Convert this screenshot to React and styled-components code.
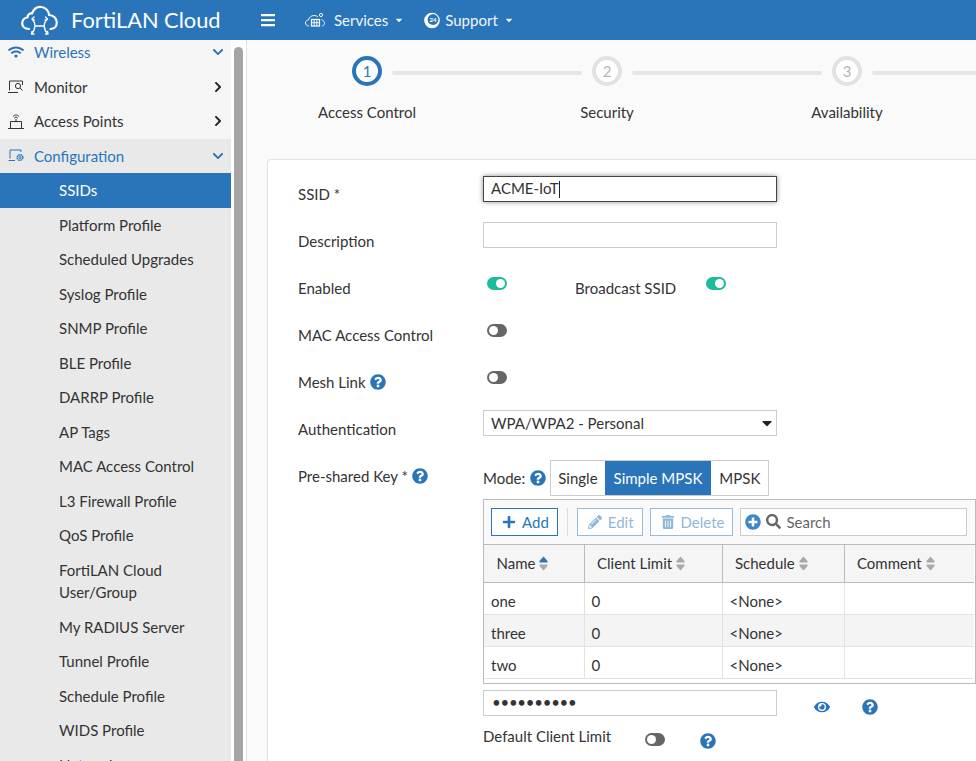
import styled, { createGlobalStyle } from "styled-components";
import {
  FaBars,
  FaCaretDown,
  FaChevronDown,
  FaChevronRight,
  FaEye,
  FaPencilAlt,
  FaPlus,
  FaPlusCircle,
  FaQuestionCircle,
  FaSearch,
  FaTrashAlt,
  FaWifi,
} from "react-icons/fa";

const BLUE = "#2a75b9";

const GlobalStyle = createGlobalStyle`
  html, body { margin: 0; height: 100%; overflow: hidden; }
  body { font-family: Lato, "Open Sans", sans-serif; font-size: 15px; color: #333; background: #fff; }
  * { box-sizing: border-box; }
`;

const Page = styled.div`
  width: 976px;
  height: 761px;
  display: flex;
  flex-direction: column;
  overflow: hidden;
`;

/* top bar */
const TopBar = styled.header`
  height: 40px;
  flex: none;
  background: ${BLUE};
  color: #fff;
  display: flex;
  align-items: center;
  padding-left: 21px;
`;

const Brand = styled.div`
  width: 239px;
  display: flex;
  align-items: center;
  gap: 13px;
  font-size: 21.8px;
  line-height: 40px;
`;

const MenuToggle = styled.div`
  width: 45px;
  display: flex;
  font-size: 16px;
`;

const TopMenu = styled.div`
  display: flex;
  align-items: center;
  gap: ${(p) => p.$iconGap}px;
  margin-right: ${(p) => p.$gap || 0}px;
  font-size: 15px;
  color: #f0f5fa;
  svg.caret { font-size: 10px; margin-left: ${(p) => 6 - p.$iconGap}px; }
`;

const Body = styled.div`
  flex: 1;
  display: flex;
  min-height: 0;
`;

/* sidebar */
const Sidebar = styled.nav`
  width: 231px;
  flex: none;
  background: #e9e9e9;
  overflow: hidden;
`;

const NavList = styled.div`
  margin-top: -4.8px;
`;

const TopItem = styled.div`
  height: 34.5px;
  display: flex;
  align-items: center;
  padding: 0 7.5px 0 8px;
  background: ${(p) => (p.$group ? "#e9e9e9" : "#f5f5f5")};
  color: ${(p) => (p.$open ? BLUE : "#333")};
  svg.arrow { font-size: 12px; color: ${(p) => (p.$open ? BLUE : "#222")}; margin-left: auto; }
`;

const NavIcon = styled.span`
  width: 26px;
  flex: none;
  display: flex;
  align-items: center;
`;

const SubItem = styled.div`
  min-height: 34.5px;
  padding: 6.12px 10px 6.13px 59px;
  line-height: 22.25px;
  background: ${(p) => (p.$active ? BLUE : "#e9e9e9")};
  color: ${(p) => (p.$active ? "#fff" : "#333")};
`;

const ScrollGutter = styled.div`
  width: 16px;
  flex: none;
  background: #fff;
  border-right: 1px solid #e3e3e3;
  padding: 7px 3px 0 3px;
`;

const ScrollThumb = styled.div`
  height: 100%;
  background: #a5a5a5;
  border-radius: 5px 5px 0 0;
`;

/* content */
const Content = styled.main`
  flex: 1;
  min-width: 0;
  background: #fafafa;
  overflow: hidden;
`;

const Steps = styled.div`
  display: flex;
  height: 119px;
  padding-top: 16px;
`;

const Step = styled.div`
  position: relative;
  width: 240px;
  flex: none;
  display: flex;
  flex-direction: column;
  align-items: center;
  gap: 15px;
  &::after {
    content: "";
    position: absolute;
    top: 15px;
    left: 145px;
    width: 190px;
    height: 4px;
    border-radius: 2px;
    background: #e6e6e6;
  }
`;

const StepCircle = styled.div`
  width: 30px;
  height: 30px;
  border-radius: 50%;
  border: 4px solid ${(p) => (p.$active ? BLUE : "#e2e2e2")};
  background: #fff;
  color: ${(p) => (p.$active ? BLUE : "#b5b5b5")};
  display: flex;
  align-items: center;
  justify-content: center;
  font-size: 15px;
`;

const StepLabel = styled.div`
  line-height: 22px;
`;

const Card = styled.section`
  margin-left: 20px;
  height: 640px;
  background: #fff;
  border: 1px solid #e2e2e2;
  border-right: none;
  border-bottom: none;
  border-radius: 4px 0 0 0;
  padding: 15.5px 0 0 30px;
`;

const Row = styled.div`
  display: flex;
  height: 46.9px;
`;

const Label = styled.div`
  width: 185px;
  flex: none;
  display: flex;
  align-items: center;
  gap: 4px;
  height: 22px;
  margin-top: 7.7px;
`;

const TextInput = styled.div`
  width: 294px;
  height: 26px;
  padding: 0 7px 1px;
  display: flex;
  align-items: center;
  background: #fff;
  color: #333;
  border: 1px solid ${(p) => (p.$focus ? "#444" : "#ccc")};
  box-shadow: ${(p) => (p.$focus ? "0 0 5px rgba(0,0,0,.45)" : "none")};
`;

const Caret = styled.span`
  width: 1px;
  height: 17px;
  margin-top: 2px;
  background: #222;
`;

const Toggle = styled.div`
  width: 20px;
  height: 13px;
  margin: ${(p) => p.$margin || "0 4px"};
  border-radius: 7px;
  background: ${(p) => (p.$on ? "#1abc9c" : "#666")};
  display: flex;
  align-items: center;
  justify-content: ${(p) => (p.$on ? "flex-end" : "flex-start")};
  padding: 0 2px;
  flex: none;
  &::before {
    content: "";
    width: 9px;
    height: 9px;
    border-radius: 50%;
    background: #fff;
  }
`;

const ToggleCell = styled.div`
  display: flex;
  align-items: flex-start;
  height: 22px;
  padding-top: 7.5px;
`;

const SideLabel = styled.div`
  margin-left: 64px;
  width: 127px;
  line-height: 22px;
  margin-top: 7.7px;
`;

const Help = styled(FaQuestionCircle)`
  color: ${BLUE};
  font-size: 16px;
  flex: none;
`;

const SelectBox = styled(TextInput)`
  justify-content: space-between;
  padding: 0 1px 0 7px;
`;

const SelectCaret = styled(FaCaretDown)`
  font-size: 16px;
  color: #222;
`;

const KeyField = styled.div`
  width: 493px;
  flex: none;
  margin-top: 3.1px;
`;

const ModeLine = styled.div`
  display: flex;
  align-items: center;
  gap: 5px;
  height: 36px;
  margin-bottom: 3px;
`;

const ModeButtons = styled.div`
  display: flex;
  border: 1px solid #ccc;
  height: 36px;
  margin-left: -1px;
`;

const ModeButton = styled.div`
  display: flex;
  align-items: center;
  padding: 0 ${(p) => p.$pad}px;
  background: ${(p) => (p.$active ? BLUE : "#fff")};
  color: ${(p) => (p.$active ? "#fff" : "#333")};
`;

const TableBox = styled.div`
  border: 1px solid #bbb;
  height: 185px;
  background: #fff;
`;

const Toolbar = styled.div`
  height: 45px;
  background: #f9f9f9;
  border-bottom: 1px solid #bbb;
  display: flex;
  align-items: center;
  padding: 0 8px 0 7px;
`;

const ToolButton = styled.div`
  height: 28px;
  padding: 0 8px 0 10px;
  display: flex;
  align-items: center;
  gap: 6px;
  background: #fff;
  border: 1px solid ${(p) => (p.$off ? "#93bcdf" : BLUE)};
  color: ${(p) => (p.$off ? "#90b8da" : BLUE)};
  margin-right: ${(p) => p.$gap || 0}px;
`;

const ToolDivider = styled.div`
  width: 1px;
  height: 28px;
  background: #ddd;
  margin: 0 9px;
`;

const SearchBox = styled.div`
  flex: 1;
  height: 28px;
  margin-left: 7px;
  background: #fff;
  border: 1px solid #ccc;
  color: #666;
  display: flex;
  align-items: center;
  gap: 5px;
  padding-left: 4px;
`;

const Table = styled.table`
  width: 490px;
  border-collapse: collapse;
  table-layout: fixed;
`;

const HeadCell = styled.th`
  height: 38px;
  padding: 0 0 2px 12.5px;
  background: #f5f5f5;
  border-bottom: 1px solid #bbb;
  border-left: 1px solid #bbb;
  font-weight: 400;
  text-align: left;
  &:first-child { border-left: none; }
`;

const Cell = styled.td`
  height: 32px;
  padding: 4px 0 0 7px;
  border-bottom: 1px solid #e2e2e2;
  border-left: 1px solid #e2e2e2;
  background: ${(p) => (p.$alt ? "#f4f4f4" : "#fff")};
  &:first-child { border-left: none; }
`;

const SortIcon = styled.svg`
  width: 9px;
  height: 15px;
  margin-left: 4px;
  vertical-align: -2px;
`;

const KeyRow = styled.div`
  display: flex;
  align-items: center;
  margin-top: 6px;
`;

const EyeIcon = styled(FaEye)`
  color: ${BLUE};
  font-size: 16px;
  margin: 8px 0 0 37px;
`;

const KeyHelp = styled(Help)`
  margin: 8px 0 0 32px;
`;

const Dots = styled.span`
  font-size: 15px;
  letter-spacing: -0.25px;
  margin-left: 1px;
  color: #333;
`;

const LimitRow = styled.div`
  display: flex;
  margin-top: 9px;
  line-height: 22px;
`;

const LimitToggle = styled.div`
  display: flex;
  align-items: center;
  gap: 35px;
  margin: 4px 0 0 34px;
  height: 22px;
`;

const LimitHelp = styled(Help)`
  margin-top: 3px;
`;

const Sort = ({ active }) => (
  <SortIcon viewBox="0 0 9 15">
    <path d="M4.5 0.5 L8.5 5 V6.5 H0.5 V5 Z" fill={active ? BLUE : "#a9a9a9"} />
    <path d="M4.5 14.5 L8.5 10 V8.5 H0.5 V10 Z" fill="#a9a9a9" />
  </SortIcon>
);

const CloudLogo = () => (
  <svg width="37" height="30" viewBox="0 0 37 30" fill="none" stroke="#fff" strokeWidth="2.2" strokeLinecap="round" strokeLinejoin="round">
    <path d="M8 24 C3 24 1.2 20.5 1.2 18 C1.2 14.5 4 12.5 6.5 12.5 C6.5 9.5 9 8 11 8.5 C13 3.5 17 1.5 20.5 2 C25 2.5 28 6.5 28 10 C32.5 10 35.8 13.5 35.8 17.5 C35.8 21.5 33 24 29.5 24" />
    <path d="M11 14 C15 18 15 24 10.5 29 M26.5 14 C22 18 22 24 27 29 M13 12 L11 14 L13.5 15 M24.5 12 L26.5 14 L24 15 M13 29 L10.5 29 L11 26.5 M24.5 29 L27 29 L26.5 26.5 M14 21 H23" strokeWidth="1.3" />
  </svg>
);

const ServicesIcon = () => (
  <svg width="20" height="16" viewBox="0 0 20 16" fill="none" stroke="#fff" strokeWidth="0.9">
    <path d="M4 14 C1.5 14 0.5 12.5 0.5 11 C0.5 9 2 8 3.5 8 C4 5.5 6 3.5 9 3.5 C10.5 3.5 12 4 13 5 M16.5 7.5 C18.5 8.5 19.5 10 19.5 11.5 C19.5 13 18 14 17 14" />
    <circle cx="16" cy="3" r="1.6" />
    <rect x="6.5" y="7.5" width="8" height="6.5" strokeWidth="1.2" />
    <path d="M6.5 10.7 H14.5 M9.2 7.5 V14 M11.8 7.5 V14" />
  </svg>
);

const SupportIcon = () => (
  <svg width="16" height="17" viewBox="0 0 16 17">
    <circle cx="8" cy="8.5" r="7.8" fill="#fff" />
    <circle cx="9" cy="7.5" r="5.4" fill={BLUE} />
    <text x="9" y="9.5" fontSize="6" fontFamily="Lato, sans-serif" fontWeight="700" textAnchor="middle" fill="#fff">24</text>
  </svg>
);

const MonitorIcon = () => (
  <svg width="16" height="14" viewBox="0 0 16 14" fill="none" stroke="#333" strokeWidth="1">
    <path d="M1.5 10.5 V1 H14.5 V5 M0 12.5 H10" />
    <circle cx="10" cy="6" r="2.6" />
    <path d="M12 8 L14.5 10.5" />
  </svg>
);

const AccessPointIcon = () => (
  <svg width="16" height="16" viewBox="0 0 16 16" fill="none" stroke="#333" strokeWidth="1">
    <path d="M2.5 15 V8.5 H13.5 V15 M0 15.5 H16 M8 8.5 V6" />
    <path d="M5 3.5 C7 1.5 9 1.5 11 3.5 M6.3 5 C7.4 4 8.6 4 9.7 5" />
  </svg>
);

const ConfigIcon = () => (
  <svg width="17" height="14" viewBox="0 0 17 14" fill="none" stroke={BLUE} strokeWidth="1">
    <path d="M2 9.5 V1 H13 V3 M0.5 11.5 H7" />
    <circle cx="12" cy="8.5" r="2.8" strokeWidth="1.6" strokeDasharray="1.6 0.6" />
    <circle cx="12" cy="8.5" r="1" />
  </svg>
);

const SUB_ITEMS = [
  "Platform Profile",
  "Scheduled Upgrades",
  "Syslog Profile",
  "SNMP Profile",
  "BLE Profile",
  "DARRP Profile",
  "AP Tags",
  "MAC Access Control",
  "L3 Firewall Profile",
  "QoS Profile",
  "FortiLAN Cloud User/Group",
  "My RADIUS Server",
  "Tunnel Profile",
  "Schedule Profile",
  "WIDS Profile",
  "Network",
];

const COLUMNS = [
  { name: "Name", width: 100, active: true },
  { name: "Client Limit", width: 138 },
  { name: "Schedule", width: 122 },
  { name: "Comment", width: 130 },
];

const ROWS = ["one", "three", "two"];

export default function App() {
  return (
    <Page>
      <GlobalStyle />
      <TopBar>
        <Brand>
          <CloudLogo />
          FortiLAN Cloud
        </Brand>
        <MenuToggle>
          <FaBars />
        </MenuToggle>
        <TopMenu $iconGap={9} $gap={20}>
          <ServicesIcon />
          Services
          <FaCaretDown className="caret" />
        </TopMenu>
        <TopMenu $iconGap={5}>
          <SupportIcon />
          Support
          <FaCaretDown className="caret" />
        </TopMenu>
      </TopBar>
      <Body>
        <Sidebar>
          <NavList>
            <TopItem $open>
              <NavIcon>
                <FaWifi size={16} />
              </NavIcon>
              Wireless
              <FaChevronDown className="arrow" />
            </TopItem>
            <TopItem>
              <NavIcon>
                <MonitorIcon />
              </NavIcon>
              Monitor
              <FaChevronRight className="arrow" />
            </TopItem>
            <TopItem>
              <NavIcon>
                <AccessPointIcon />
              </NavIcon>
              Access Points
              <FaChevronRight className="arrow" />
            </TopItem>
            <TopItem $open $group>
              <NavIcon>
                <ConfigIcon />
              </NavIcon>
              Configuration
              <FaChevronDown className="arrow" />
            </TopItem>
            <SubItem $active>SSIDs</SubItem>
            {SUB_ITEMS.map((item) => (
              <SubItem key={item}>{item}</SubItem>
            ))}
          </NavList>
        </Sidebar>
        <ScrollGutter>
          <ScrollThumb />
        </ScrollGutter>
        <Content>
          <Steps>
            <Step>
              <StepCircle $active>1</StepCircle>
              <StepLabel>Access Control</StepLabel>
            </Step>
            <Step>
              <StepCircle>2</StepCircle>
              <StepLabel>Security</StepLabel>
            </Step>
            <Step>
              <StepCircle>3</StepCircle>
              <StepLabel>Availability</StepLabel>
            </Step>
          </Steps>
          <Card>
            <Row>
              <Label>SSID *</Label>
              <TextInput $focus>
                ACME-IoT
                <Caret />
              </TextInput>
            </Row>
            <Row>
              <Label>Description</Label>
              <TextInput />
            </Row>
            <Row>
              <Label>Enabled</Label>
              <ToggleCell>
                <Toggle $on />
              </ToggleCell>
              <SideLabel>Broadcast SSID</SideLabel>
              <ToggleCell>
                <Toggle $on />
              </ToggleCell>
            </Row>
            <Row>
              <Label>MAC Access Control</Label>
              <ToggleCell>
                <Toggle />
              </ToggleCell>
            </Row>
            <Row>
              <Label>
                Mesh Link <Help />
              </Label>
              <ToggleCell>
                <Toggle />
              </ToggleCell>
            </Row>
            <Row>
              <Label>Authentication</Label>
              <SelectBox>
                WPA/WPA2 - Personal
                <SelectCaret />
              </SelectBox>
            </Row>
            <Row>
              <Label>
                Pre-shared Key * <Help />
              </Label>
              <KeyField>
                <ModeLine>
                  Mode: <Help />
                  <ModeButtons>
                    <ModeButton $pad={7}>Single</ModeButton>
                    <ModeButton $pad={9} $active>Simple MPSK</ModeButton>
                    <ModeButton $pad={8}>MPSK</ModeButton>
                  </ModeButtons>
                </ModeLine>
                <TableBox>
                  <Toolbar>
                    <ToolButton>
                      <FaPlus size={14} />
                      Add
                    </ToolButton>
                    <ToolDivider />
                    <ToolButton $off $gap={7}>
                      <FaPencilAlt size={14} />
                      Edit
                    </ToolButton>
                    <ToolButton $off>
                      <FaTrashAlt size={14} />
                      Delete
                    </ToolButton>
                    <SearchBox>
                      <FaPlusCircle size={16} color="#3f87c6" />
                      <FaSearch size={15} color="#666" />
                      Search
                    </SearchBox>
                  </Toolbar>
                  <Table>
                    <colgroup>
                      {COLUMNS.map((col) => (
                        <col key={col.name} width={col.width} />
                      ))}
                    </colgroup>
                    <thead>
                      <tr>
                        {COLUMNS.map((col) => (
                          <HeadCell key={col.name}>
                            {col.name}
                            <Sort active={col.active} />
                          </HeadCell>
                        ))}
                      </tr>
                    </thead>
                    <tbody>
                      {ROWS.map((name, i) => (
                        <tr key={name}>
                          <Cell $alt={i === 1}>{name}</Cell>
                          <Cell $alt={i === 1}>0</Cell>
                          <Cell $alt={i === 1}>&lt;None&gt;</Cell>
                          <Cell $alt={i === 1} />
                        </tr>
                      ))}
                    </tbody>
                  </Table>
                </TableBox>
                <KeyRow>
                  <TextInput>
                    <Dots>••••••••••</Dots>
                  </TextInput>
                  <EyeIcon />
                  <KeyHelp />
                </KeyRow>
                <LimitRow>
                  Default Client Limit
                  <LimitToggle>
                    <Toggle $margin="0" />
                    <LimitHelp />
                  </LimitToggle>
                </LimitRow>
              </KeyField>
            </Row>
          </Card>
        </Content>
      </Body>
    </Page>
  );
}
